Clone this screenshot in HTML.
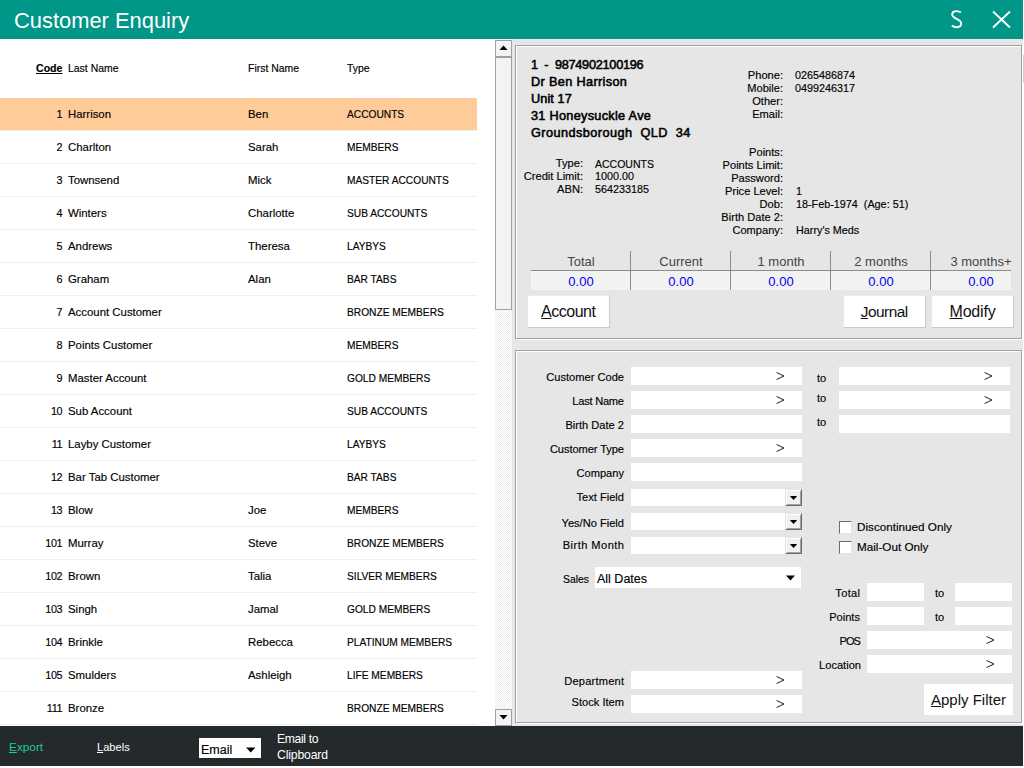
<!DOCTYPE html>
<html><head><meta charset="utf-8"><title>Customer Enquiry</title>
<style>
html,body{margin:0;padding:0;width:1024px;height:768px;overflow:hidden;background:#fff}
body{position:relative;font-family:"Liberation Sans",sans-serif}
.t{position:absolute;white-space:nowrap;line-height:normal;font-family:"Liberation Sans",sans-serif;-webkit-text-stroke:0.15px currentColor}
u{text-decoration:underline;text-underline-offset:1px}
</style></head><body>
<div style="position:absolute;left:0px;top:0px;width:1024px;height:768px;background:#fff"></div>
<div style="position:absolute;left:0px;top:0px;width:1023px;height:39px;background:#009688"></div>
<div class="t" style="left:14px;top:8.18px;font-size:21.9px;color:#fff;-webkit-text-stroke:0">Customer Enquiry</div>
<svg style="position:absolute;left:940px;top:0" width="84" height="39" viewBox="940 0 84 39"><path d="M960.8 12.6 C959.5 11.6 958 11.1 956.4 11.1 C953.6 11.1 952.2 12.8 952.2 14.6 C952.2 16.6 953.6 17.6 956.6 18.9 C959.6 20.2 961.2 21.4 961.2 23.6 C961.2 25.8 959.4 27.2 956.6 27.2 C954.6 27.2 952.9 26.5 951.8 25.5" fill="none" stroke="#fff" stroke-width="1.9"/><path d="M993 11.5 L1010 27.5 M1010 11.5 L993 27.5" stroke="#fff" stroke-width="1.8"/></svg>
<div style="position:absolute;left:512px;top:39px;width:511px;height:687px;background:#e6e6e6"></div>
<div class="t" style="left:36px;top:62.41px;font-size:10.6px;font-weight:bold;color:#000;"><u>Code</u></div>
<div class="t" style="left:68px;top:62.55px;font-size:10.44px;color:#000;">Last Name</div>
<div class="t" style="left:248px;top:62.55px;font-size:10.44px;color:#000;">First Name</div>
<div class="t" style="left:347px;top:62.55px;font-size:10.44px;color:#000;">Type</div>
<div style="position:absolute;left:0px;top:98px;width:477px;height:32px;background:#ffcc99"></div>
<div class="t" style="left:22.299999999999997px;width:40px;text-align:right;top:108.23px;font-size:10.8px;color:#000;letter-spacing:-0.3px">1</div>
<div class="t" style="left:68px;top:107.68px;font-size:11.4px;color:#000;">Harrison</div>
<div class="t" style="left:248px;top:107.68px;font-size:11.4px;color:#000;">Ben</div>
<div class="t" style="left:347px;top:108.77px;font-size:10.2px;color:#000;">ACCOUNTS</div>
<div style="position:absolute;left:0px;top:130px;width:477px;height:1px;background:#efefef"></div>
<div class="t" style="left:22.299999999999997px;width:40px;text-align:right;top:141.23px;font-size:10.8px;color:#000;letter-spacing:-0.3px">2</div>
<div class="t" style="left:68px;top:140.68px;font-size:11.4px;color:#000;">Charlton</div>
<div class="t" style="left:248px;top:140.68px;font-size:11.4px;color:#000;">Sarah</div>
<div class="t" style="left:347px;top:141.77px;font-size:10.2px;color:#000;">MEMBERS</div>
<div style="position:absolute;left:0px;top:163px;width:477px;height:1px;background:#efefef"></div>
<div class="t" style="left:22.299999999999997px;width:40px;text-align:right;top:174.23px;font-size:10.8px;color:#000;letter-spacing:-0.3px">3</div>
<div class="t" style="left:68px;top:173.68px;font-size:11.4px;color:#000;">Townsend</div>
<div class="t" style="left:248px;top:173.68px;font-size:11.4px;color:#000;">Mick</div>
<div class="t" style="left:347px;top:174.77px;font-size:10.2px;color:#000;">MASTER ACCOUNTS</div>
<div style="position:absolute;left:0px;top:196px;width:477px;height:1px;background:#efefef"></div>
<div class="t" style="left:22.299999999999997px;width:40px;text-align:right;top:207.23px;font-size:10.8px;color:#000;letter-spacing:-0.3px">4</div>
<div class="t" style="left:68px;top:206.68px;font-size:11.4px;color:#000;">Winters</div>
<div class="t" style="left:248px;top:206.68px;font-size:11.4px;color:#000;">Charlotte</div>
<div class="t" style="left:347px;top:207.77px;font-size:10.2px;color:#000;">SUB ACCOUNTS</div>
<div style="position:absolute;left:0px;top:229px;width:477px;height:1px;background:#efefef"></div>
<div class="t" style="left:22.299999999999997px;width:40px;text-align:right;top:240.23px;font-size:10.8px;color:#000;letter-spacing:-0.3px">5</div>
<div class="t" style="left:68px;top:239.68px;font-size:11.4px;color:#000;">Andrews</div>
<div class="t" style="left:248px;top:239.68px;font-size:11.4px;color:#000;">Theresa</div>
<div class="t" style="left:347px;top:240.77px;font-size:10.2px;color:#000;">LAYBYS</div>
<div style="position:absolute;left:0px;top:262px;width:477px;height:1px;background:#efefef"></div>
<div class="t" style="left:22.299999999999997px;width:40px;text-align:right;top:273.23px;font-size:10.8px;color:#000;letter-spacing:-0.3px">6</div>
<div class="t" style="left:68px;top:272.68px;font-size:11.4px;color:#000;">Graham</div>
<div class="t" style="left:248px;top:272.68px;font-size:11.4px;color:#000;">Alan</div>
<div class="t" style="left:347px;top:273.77px;font-size:10.2px;color:#000;">BAR TABS</div>
<div style="position:absolute;left:0px;top:295px;width:477px;height:1px;background:#efefef"></div>
<div class="t" style="left:22.299999999999997px;width:40px;text-align:right;top:306.23px;font-size:10.8px;color:#000;letter-spacing:-0.3px">7</div>
<div class="t" style="left:68px;top:305.68px;font-size:11.4px;color:#000;">Account Customer</div>
<div class="t" style="left:248px;top:305.68px;font-size:11.4px;color:#000;"></div>
<div class="t" style="left:347px;top:306.77px;font-size:10.2px;color:#000;">BRONZE MEMBERS</div>
<div style="position:absolute;left:0px;top:328px;width:477px;height:1px;background:#efefef"></div>
<div class="t" style="left:22.299999999999997px;width:40px;text-align:right;top:339.23px;font-size:10.8px;color:#000;letter-spacing:-0.3px">8</div>
<div class="t" style="left:68px;top:338.68px;font-size:11.4px;color:#000;">Points Customer</div>
<div class="t" style="left:248px;top:338.68px;font-size:11.4px;color:#000;"></div>
<div class="t" style="left:347px;top:339.77px;font-size:10.2px;color:#000;">MEMBERS</div>
<div style="position:absolute;left:0px;top:361px;width:477px;height:1px;background:#efefef"></div>
<div class="t" style="left:22.299999999999997px;width:40px;text-align:right;top:372.23px;font-size:10.8px;color:#000;letter-spacing:-0.3px">9</div>
<div class="t" style="left:68px;top:371.68px;font-size:11.4px;color:#000;">Master Account</div>
<div class="t" style="left:248px;top:371.68px;font-size:11.4px;color:#000;"></div>
<div class="t" style="left:347px;top:372.77px;font-size:10.2px;color:#000;">GOLD MEMBERS</div>
<div style="position:absolute;left:0px;top:394px;width:477px;height:1px;background:#efefef"></div>
<div class="t" style="left:22.299999999999997px;width:40px;text-align:right;top:405.23px;font-size:10.8px;color:#000;letter-spacing:-0.3px">10</div>
<div class="t" style="left:68px;top:404.68px;font-size:11.4px;color:#000;">Sub Account</div>
<div class="t" style="left:248px;top:404.68px;font-size:11.4px;color:#000;"></div>
<div class="t" style="left:347px;top:405.77px;font-size:10.2px;color:#000;">SUB ACCOUNTS</div>
<div style="position:absolute;left:0px;top:427px;width:477px;height:1px;background:#efefef"></div>
<div class="t" style="left:22.299999999999997px;width:40px;text-align:right;top:438.23px;font-size:10.8px;color:#000;letter-spacing:-0.3px">11</div>
<div class="t" style="left:68px;top:437.68px;font-size:11.4px;color:#000;">Layby Customer</div>
<div class="t" style="left:248px;top:437.68px;font-size:11.4px;color:#000;"></div>
<div class="t" style="left:347px;top:438.77px;font-size:10.2px;color:#000;">LAYBYS</div>
<div style="position:absolute;left:0px;top:460px;width:477px;height:1px;background:#efefef"></div>
<div class="t" style="left:22.299999999999997px;width:40px;text-align:right;top:471.23px;font-size:10.8px;color:#000;letter-spacing:-0.3px">12</div>
<div class="t" style="left:68px;top:470.68px;font-size:11.4px;color:#000;">Bar Tab Customer</div>
<div class="t" style="left:248px;top:470.68px;font-size:11.4px;color:#000;"></div>
<div class="t" style="left:347px;top:471.77px;font-size:10.2px;color:#000;">BAR TABS</div>
<div style="position:absolute;left:0px;top:493px;width:477px;height:1px;background:#efefef"></div>
<div class="t" style="left:22.299999999999997px;width:40px;text-align:right;top:504.23px;font-size:10.8px;color:#000;letter-spacing:-0.3px">13</div>
<div class="t" style="left:68px;top:503.68px;font-size:11.4px;color:#000;">Blow</div>
<div class="t" style="left:248px;top:503.68px;font-size:11.4px;color:#000;">Joe</div>
<div class="t" style="left:347px;top:504.77px;font-size:10.2px;color:#000;">MEMBERS</div>
<div style="position:absolute;left:0px;top:526px;width:477px;height:1px;background:#efefef"></div>
<div class="t" style="left:22.299999999999997px;width:40px;text-align:right;top:537.23px;font-size:10.8px;color:#000;letter-spacing:-0.3px">101</div>
<div class="t" style="left:68px;top:536.68px;font-size:11.4px;color:#000;">Murray</div>
<div class="t" style="left:248px;top:536.68px;font-size:11.4px;color:#000;">Steve</div>
<div class="t" style="left:347px;top:537.77px;font-size:10.2px;color:#000;">BRONZE MEMBERS</div>
<div style="position:absolute;left:0px;top:559px;width:477px;height:1px;background:#efefef"></div>
<div class="t" style="left:22.299999999999997px;width:40px;text-align:right;top:570.23px;font-size:10.8px;color:#000;letter-spacing:-0.3px">102</div>
<div class="t" style="left:68px;top:569.68px;font-size:11.4px;color:#000;">Brown</div>
<div class="t" style="left:248px;top:569.68px;font-size:11.4px;color:#000;">Talia</div>
<div class="t" style="left:347px;top:570.77px;font-size:10.2px;color:#000;">SILVER MEMBERS</div>
<div style="position:absolute;left:0px;top:592px;width:477px;height:1px;background:#efefef"></div>
<div class="t" style="left:22.299999999999997px;width:40px;text-align:right;top:603.23px;font-size:10.8px;color:#000;letter-spacing:-0.3px">103</div>
<div class="t" style="left:68px;top:602.68px;font-size:11.4px;color:#000;">Singh</div>
<div class="t" style="left:248px;top:602.68px;font-size:11.4px;color:#000;">Jamal</div>
<div class="t" style="left:347px;top:603.77px;font-size:10.2px;color:#000;">GOLD MEMBERS</div>
<div style="position:absolute;left:0px;top:625px;width:477px;height:1px;background:#efefef"></div>
<div class="t" style="left:22.299999999999997px;width:40px;text-align:right;top:636.23px;font-size:10.8px;color:#000;letter-spacing:-0.3px">104</div>
<div class="t" style="left:68px;top:635.68px;font-size:11.4px;color:#000;">Brinkle</div>
<div class="t" style="left:248px;top:635.68px;font-size:11.4px;color:#000;">Rebecca</div>
<div class="t" style="left:347px;top:636.77px;font-size:10.2px;color:#000;">PLATINUM MEMBERS</div>
<div style="position:absolute;left:0px;top:658px;width:477px;height:1px;background:#efefef"></div>
<div class="t" style="left:22.299999999999997px;width:40px;text-align:right;top:669.23px;font-size:10.8px;color:#000;letter-spacing:-0.3px">105</div>
<div class="t" style="left:68px;top:668.68px;font-size:11.4px;color:#000;">Smulders</div>
<div class="t" style="left:248px;top:668.68px;font-size:11.4px;color:#000;">Ashleigh</div>
<div class="t" style="left:347px;top:669.77px;font-size:10.2px;color:#000;">LIFE MEMBERS</div>
<div style="position:absolute;left:0px;top:691px;width:477px;height:1px;background:#efefef"></div>
<div class="t" style="left:22.299999999999997px;width:40px;text-align:right;top:702.23px;font-size:10.8px;color:#000;letter-spacing:-0.3px">111</div>
<div class="t" style="left:68px;top:701.68px;font-size:11.4px;color:#000;">Bronze</div>
<div class="t" style="left:248px;top:701.68px;font-size:11.4px;color:#000;"></div>
<div class="t" style="left:347px;top:702.77px;font-size:10.2px;color:#000;">BRONZE MEMBERS</div>
<div style="position:absolute;left:0px;top:724px;width:477px;height:1px;background:#efefef"></div>
<div style="position:absolute;left:1023px;top:55px;width:1px;height:28px;background:#d0d0d0"></div>
<div style="position:absolute;left:495px;top:40px;width:17px;height:686px;background-color:#fff;background-image:linear-gradient(45deg,#eee 25%,transparent 25%,transparent 75%,#eee 75%),linear-gradient(45deg,#eee 25%,transparent 25%,transparent 75%,#eee 75%);background-size:2px 2px;background-position:0 0,1px 1px"></div>
<div style="position:absolute;left:495px;top:40px;width:17px;height:17px;background:#f3f3f3;box-sizing:border-box;border:1px solid #a0a0a0"></div>
<div style="position:absolute;left:495px;top:57px;width:17px;height:253px;background:#f3f3f3;box-sizing:border-box;border:1px solid #a0a0a0"></div>
<div style="position:absolute;left:495px;top:709px;width:17px;height:17px;background:#f3f3f3;box-sizing:border-box;border:1px solid #a0a0a0"></div>
<svg style="position:absolute;left:495px;top:40px" width="17" height="17"><path d="M4.5 10 L12.5 10 L8.5 5.5 Z" fill="#000"/></svg>
<svg style="position:absolute;left:495px;top:709px" width="17" height="17"><path d="M4.5 6 L12.5 6 L8.5 10.5 Z" fill="#000"/></svg>
<div style="position:absolute;left:516px;top:46px;width:507px;height:294px;box-sizing:border-box;border:1px solid #fff"></div>
<div style="position:absolute;left:515px;top:45px;width:507px;height:294px;box-sizing:border-box;border:1px solid #a0a0a0"></div>
<div style="position:absolute;left:516px;top:351px;width:507px;height:373px;box-sizing:border-box;border:1px solid #fff"></div>
<div style="position:absolute;left:515px;top:350px;width:507px;height:373px;box-sizing:border-box;border:1px solid #a0a0a0"></div>
<div class="t" style="left:531px;top:57.51px;font-size:12.7px;color:#000;letter-spacing:-0.25px;-webkit-text-stroke:0.55px #000">1&nbsp; -&nbsp; 9874902100196</div>
<div class="t" style="left:531px;top:74.51px;font-size:12.7px;color:#000;letter-spacing:0.35px;-webkit-text-stroke:0.55px #000">Dr Ben Harrison</div>
<div class="t" style="left:531px;top:91.51px;font-size:12.7px;color:#000;letter-spacing:0.1px;-webkit-text-stroke:0.55px #000">Unit 17</div>
<div class="t" style="left:531px;top:108.51px;font-size:12.7px;color:#000;letter-spacing:0.3px;-webkit-text-stroke:0.55px #000">31 Honeysuckle Ave</div>
<div class="t" style="left:531px;top:125.51px;font-size:12.7px;color:#000;letter-spacing:0.45px;-webkit-text-stroke:0.55px #000">Groundsborough&nbsp; QLD&nbsp; 34</div>
<div class="t" style="left:683px;width:100px;text-align:right;top:68.95px;font-size:11.1px;color:#000;">Phone:</div>
<div class="t" style="left:683px;width:100px;text-align:right;top:81.95px;font-size:11.1px;color:#000;">Mobile:</div>
<div class="t" style="left:683px;width:100px;text-align:right;top:94.95px;font-size:11.1px;color:#000;">Other:</div>
<div class="t" style="left:683px;width:100px;text-align:right;top:107.95px;font-size:11.1px;color:#000;">Email:</div>
<div class="t" style="left:795px;top:69.23px;font-size:10.8px;color:#000;">0265486874</div>
<div class="t" style="left:795px;top:82.23px;font-size:10.8px;color:#000;">0499246317</div>
<div class="t" style="left:483px;width:100px;text-align:right;top:156.95px;font-size:11.1px;color:#000;">Type:</div>
<div class="t" style="left:483px;width:100px;text-align:right;top:169.95px;font-size:11.1px;color:#000;">Credit Limit:</div>
<div class="t" style="left:483px;width:100px;text-align:right;top:182.95px;font-size:11.1px;color:#000;">ABN:</div>
<div class="t" style="left:595px;top:157.50px;font-size:10.5px;color:#000;">ACCOUNTS</div>
<div class="t" style="left:595px;top:170.23px;font-size:10.8px;color:#000;">1000.00</div>
<div class="t" style="left:595px;top:183.23px;font-size:10.8px;color:#000;">564233185</div>
<div class="t" style="left:683px;width:100px;text-align:right;top:145.95px;font-size:11.1px;color:#000;">Points:</div>
<div class="t" style="left:683px;width:100px;text-align:right;top:158.95px;font-size:11.1px;color:#000;">Points Limit:</div>
<div class="t" style="left:683px;width:100px;text-align:right;top:171.95px;font-size:11.1px;color:#000;">Password:</div>
<div class="t" style="left:683px;width:100px;text-align:right;top:184.95px;font-size:11.1px;color:#000;">Price Level:</div>
<div class="t" style="left:683px;width:100px;text-align:right;top:197.95px;font-size:11.1px;color:#000;">Dob:</div>
<div class="t" style="left:683px;width:100px;text-align:right;top:210.95px;font-size:11.1px;color:#000;">Birth Date 2:</div>
<div class="t" style="left:683px;width:100px;text-align:right;top:223.95px;font-size:11.1px;color:#000;">Company:</div>
<div class="t" style="left:796px;top:185.23px;font-size:10.8px;color:#000;">1</div>
<div class="t" style="left:796px;top:198.23px;font-size:10.8px;color:#000;">18-Feb-1974&nbsp; (Age: 51)</div>
<div class="t" style="left:796px;top:224.23px;font-size:10.8px;color:#000;">Harry's Meds</div>
<div style="position:absolute;left:531px;top:270px;width:480px;height:1px;background:#8c8c8c"></div>
<div style="position:absolute;left:531px;top:271px;width:480px;height:19px;background:#f2f2f2"></div>
<div class="t" style="left:531.0px;width:100px;text-align:center;top:254.24px;font-size:13px;color:#444;-webkit-text-stroke:0">Total</div>
<div class="t" style="left:531.0px;width:100px;text-align:center;top:274.24px;font-size:13px;color:#0000f0;-webkit-text-stroke:0">0.00</div>
<div class="t" style="left:631.0px;width:100px;text-align:center;top:254.24px;font-size:13px;color:#444;-webkit-text-stroke:0">Current</div>
<div class="t" style="left:631.0px;width:100px;text-align:center;top:274.24px;font-size:13px;color:#0000f0;-webkit-text-stroke:0">0.00</div>
<div style="position:absolute;left:630px;top:251px;width:1px;height:39px;background:#8c8c8c"></div>
<div class="t" style="left:731.0px;width:100px;text-align:center;top:254.24px;font-size:13px;color:#444;-webkit-text-stroke:0">1 month</div>
<div class="t" style="left:731.0px;width:100px;text-align:center;top:274.24px;font-size:13px;color:#0000f0;-webkit-text-stroke:0">0.00</div>
<div style="position:absolute;left:730px;top:251px;width:1px;height:39px;background:#8c8c8c"></div>
<div class="t" style="left:831.0px;width:100px;text-align:center;top:254.24px;font-size:13px;color:#444;-webkit-text-stroke:0">2 months</div>
<div class="t" style="left:831.0px;width:100px;text-align:center;top:274.24px;font-size:13px;color:#0000f0;-webkit-text-stroke:0">0.00</div>
<div style="position:absolute;left:830px;top:251px;width:1px;height:39px;background:#8c8c8c"></div>
<div class="t" style="left:931.0px;width:100px;text-align:center;top:254.24px;font-size:13px;color:#444;-webkit-text-stroke:0">3 months+</div>
<div class="t" style="left:931.0px;width:100px;text-align:center;top:274.24px;font-size:13px;color:#0000f0;-webkit-text-stroke:0">0.00</div>
<div style="position:absolute;left:930px;top:251px;width:1px;height:39px;background:#8c8c8c"></div>
<div style="position:absolute;left:527px;top:295px;width:83px;height:33px;background:#fff;box-sizing:border-box;border:1px solid #cfcbc0;border-top-color:#f0eee4;border-left-color:#eceae0"></div>
<div class="t" style="left:468.5px;width:200px;text-align:center;top:302.52px;font-size:16px;color:#111;letter-spacing:-0.5px;text-indent:-0.5px;-webkit-text-stroke:0"><u>A</u>ccount</div>
<div style="position:absolute;left:843px;top:295px;width:83px;height:33px;background:#fff;box-sizing:border-box;border:1px solid #cfcbc0;border-top-color:#f0eee4;border-left-color:#eceae0"></div>
<div class="t" style="left:784.5px;width:200px;text-align:center;top:303.06px;font-size:15.4px;color:#111;letter-spacing:-0.5px;text-indent:-0.5px;-webkit-text-stroke:0"><u>J</u>ournal</div>
<div style="position:absolute;left:931px;top:295px;width:83px;height:33px;background:#fff;box-sizing:border-box;border:1px solid #cfcbc0;border-top-color:#f0eee4;border-left-color:#eceae0"></div>
<div class="t" style="left:872.5px;width:200px;text-align:center;top:302.52px;font-size:16px;color:#111;letter-spacing:-0.2px;-webkit-text-stroke:0"><u>M</u>odify</div>
<div class="t" style="left:474px;width:150px;text-align:right;top:370.95px;font-size:11.1px;color:#000;">Customer Code</div>
<div style="position:absolute;left:631px;top:367px;width:171px;height:18px;background:#fff"></div>
<svg style="position:absolute;left:776px;top:372px" width="9" height="8"><path d="M0.5 0.5 L8 4 L0.5 7.5" fill="none" stroke="#222" stroke-width="1"/></svg>
<div class="t" style="left:473.75px;width:150px;text-align:right;top:394.95px;font-size:11.1px;color:#000;letter-spacing:-0.25px">Last Name</div>
<div style="position:absolute;left:631px;top:391px;width:171px;height:18px;background:#fff"></div>
<svg style="position:absolute;left:776px;top:396px" width="9" height="8"><path d="M0.5 0.5 L8 4 L0.5 7.5" fill="none" stroke="#222" stroke-width="1"/></svg>
<div class="t" style="left:474px;width:150px;text-align:right;top:418.95px;font-size:11.1px;color:#000;">Birth Date 2</div>
<div style="position:absolute;left:631px;top:415px;width:171px;height:18px;background:#fff"></div>
<div class="t" style="left:473.91999999999996px;width:150px;text-align:right;top:442.95px;font-size:11.1px;color:#000;letter-spacing:-0.08px">Customer Type</div>
<div style="position:absolute;left:631px;top:439px;width:171px;height:18px;background:#fff"></div>
<svg style="position:absolute;left:776px;top:444px" width="9" height="8"><path d="M0.5 0.5 L8 4 L0.5 7.5" fill="none" stroke="#222" stroke-width="1"/></svg>
<div class="t" style="left:474px;width:150px;text-align:right;top:466.95px;font-size:11.1px;color:#000;">Company</div>
<div style="position:absolute;left:631px;top:463px;width:171px;height:18px;background:#fff"></div>
<div class="t" style="left:817px;top:371.95px;font-size:11.1px;color:#000;">to</div>
<div style="position:absolute;left:839px;top:367px;width:171px;height:18px;background:#fff"></div>
<svg style="position:absolute;left:984px;top:372px" width="9" height="8"><path d="M0.5 0.5 L8 4 L0.5 7.5" fill="none" stroke="#222" stroke-width="1"/></svg>
<div class="t" style="left:817px;top:391.95px;font-size:11.1px;color:#000;">to</div>
<div style="position:absolute;left:839px;top:391px;width:171px;height:18px;background:#fff"></div>
<svg style="position:absolute;left:984px;top:396px" width="9" height="8"><path d="M0.5 0.5 L8 4 L0.5 7.5" fill="none" stroke="#222" stroke-width="1"/></svg>
<div class="t" style="left:817px;top:415.95px;font-size:11.1px;color:#000;">to</div>
<div style="position:absolute;left:839px;top:415px;width:171px;height:18px;background:#fff"></div>
<div class="t" style="left:474px;width:150px;text-align:right;top:490.95px;font-size:11.1px;color:#000;">Text Field</div>
<div style="position:absolute;left:631px;top:489px;width:171px;height:17px;background:#fff"></div>
<div style="position:absolute;left:785px;top:489px;width:17px;height:17px;background:#f0f0f0;box-sizing:border-box;border-top:1px solid #e3e3e3;border-left:1px solid #e3e3e3;border-right:1px solid #696969;border-bottom:1px solid #696969;box-shadow:inset 1px 1px #fff,inset -1px -1px #a0a0a0"></div>
<svg style="position:absolute;left:785px;top:489px" width="17" height="17"><path d="M4.8 7 L12.2 7 L8.5 11 Z" fill="#000"/></svg>
<div class="t" style="left:474px;width:150px;text-align:right;top:516.95px;font-size:11.1px;color:#000;">Yes/No Field</div>
<div style="position:absolute;left:631px;top:513px;width:171px;height:17px;background:#fff"></div>
<div style="position:absolute;left:785px;top:513px;width:17px;height:17px;background:#f0f0f0;box-sizing:border-box;border-top:1px solid #e3e3e3;border-left:1px solid #e3e3e3;border-right:1px solid #696969;border-bottom:1px solid #696969;box-shadow:inset 1px 1px #fff,inset -1px -1px #a0a0a0"></div>
<svg style="position:absolute;left:785px;top:513px" width="17" height="17"><path d="M4.8 7 L12.2 7 L8.5 11 Z" fill="#000"/></svg>
<div class="t" style="left:474.45000000000005px;width:150px;text-align:right;top:538.95px;font-size:11.1px;color:#000;letter-spacing:0.45px">Birth Month</div>
<div style="position:absolute;left:631px;top:537px;width:171px;height:17px;background:#fff"></div>
<div style="position:absolute;left:785px;top:537px;width:17px;height:17px;background:#f0f0f0;box-sizing:border-box;border-top:1px solid #e3e3e3;border-left:1px solid #e3e3e3;border-right:1px solid #696969;border-bottom:1px solid #696969;box-shadow:inset 1px 1px #fff,inset -1px -1px #a0a0a0"></div>
<svg style="position:absolute;left:785px;top:537px" width="17" height="17"><path d="M4.8 7 L12.2 7 L8.5 11 Z" fill="#000"/></svg>
<div style="position:absolute;left:839px;top:521px;width:13px;height:13px;background:#fff;box-sizing:border-box;border-top:1px solid #6d6d6d;border-left:1px solid #6d6d6d;border-right:1px solid #e3e3e3;border-bottom:1px solid #e3e3e3"></div>
<div class="t" style="left:857px;top:520.41px;font-size:11.7px;color:#000;">Discontinued Only</div>
<div style="position:absolute;left:839px;top:541px;width:13px;height:13px;background:#fff;box-sizing:border-box;border-top:1px solid #6d6d6d;border-left:1px solid #6d6d6d;border-right:1px solid #e3e3e3;border-bottom:1px solid #e3e3e3"></div>
<div class="t" style="left:857px;top:540.41px;font-size:11.7px;color:#000;">Mail-Out Only</div>
<div class="t" style="left:489px;width:100px;text-align:right;top:573.59px;font-size:10.4px;color:#000;">Sales</div>
<div style="position:absolute;left:595px;top:567px;width:206px;height:21px;background:#fff"></div>
<div class="t" style="left:597px;top:571.69px;font-size:12.5px;color:#000;">All Dates</div>
<svg style="position:absolute;left:786px;top:575px" width="10" height="7"><path d="M0 0.5 L9 0.5 L4.5 5.5 Z" fill="#000"/></svg>
<div class="t" style="left:760.3px;width:100px;text-align:right;top:586.95px;font-size:11.1px;color:#000;letter-spacing:0.3px">Total</div>
<div style="position:absolute;left:867px;top:583px;width:57px;height:18px;background:#fff"></div>
<div class="t" style="left:935px;top:586.95px;font-size:11.1px;color:#000;">to</div>
<div style="position:absolute;left:955px;top:583px;width:57px;height:18px;background:#fff"></div>
<div class="t" style="left:760px;width:100px;text-align:right;top:610.95px;font-size:11.1px;color:#000;">Points</div>
<div style="position:absolute;left:867px;top:607px;width:57px;height:18px;background:#fff"></div>
<div class="t" style="left:935px;top:610.95px;font-size:11.1px;color:#000;">to</div>
<div style="position:absolute;left:955px;top:607px;width:57px;height:18px;background:#fff"></div>
<div class="t" style="left:760.0px;width:100px;text-align:right;top:634.95px;font-size:11.1px;color:#000;letter-spacing:-1.0px">POS</div>
<div style="position:absolute;left:867px;top:631px;width:145px;height:18px;background:#fff"></div>
<svg style="position:absolute;left:986px;top:636px" width="9" height="8"><path d="M0.5 0.5 L8 4 L0.5 7.5" fill="none" stroke="#222" stroke-width="1"/></svg>
<div class="t" style="left:761px;width:100px;text-align:right;top:658.95px;font-size:11.1px;color:#000;">Location</div>
<div style="position:absolute;left:867px;top:655px;width:145px;height:18px;background:#fff"></div>
<svg style="position:absolute;left:986px;top:660px" width="9" height="8"><path d="M0.5 0.5 L8 4 L0.5 7.5" fill="none" stroke="#222" stroke-width="1"/></svg>
<div class="t" style="left:474.20000000000005px;width:150px;text-align:right;top:674.95px;font-size:11.1px;color:#000;letter-spacing:0.2px">Department</div>
<div style="position:absolute;left:631px;top:671px;width:171px;height:18px;background:#fff"></div>
<svg style="position:absolute;left:776px;top:676px" width="9" height="8"><path d="M0.5 0.5 L8 4 L0.5 7.5" fill="none" stroke="#222" stroke-width="1"/></svg>
<div class="t" style="left:474px;width:150px;text-align:right;top:695.95px;font-size:11.1px;color:#000;">Stock Item</div>
<div style="position:absolute;left:631px;top:695px;width:171px;height:18px;background:#fff"></div>
<svg style="position:absolute;left:776px;top:700px" width="9" height="8"><path d="M0.5 0.5 L8 4 L0.5 7.5" fill="none" stroke="#222" stroke-width="1"/></svg>
<div style="position:absolute;left:924px;top:684px;width:89px;height:31px;background:#fff"></div>
<div class="t" style="left:868.5px;width:200px;text-align:center;top:691.42px;font-size:15px;color:#111;-webkit-text-stroke:0"><u>A</u>pply Filter</div>
<div style="position:absolute;left:0px;top:726px;width:1023px;height:40px;background:#24292c"></div>
<div class="t" style="left:9px;top:740.32px;font-size:11.8px;color:#1ec8a0;-webkit-text-stroke:0"><u>E</u>xport</div>
<div class="t" style="left:97px;top:740.95px;font-size:11.1px;color:#fff;-webkit-text-stroke:0"><u>L</u>abels</div>
<div style="position:absolute;left:199px;top:738px;width:62px;height:20px;background:#fff"></div>
<div class="t" style="left:201px;top:742.69px;font-size:12.5px;color:#000;">Email</div>
<svg style="position:absolute;left:246px;top:747px" width="10" height="6"><path d="M0 0.5 L9.5 0.5 L4.75 5.5 Z" fill="#000"/></svg>
<div class="t" style="left:277px;top:731.96px;font-size:12.2px;color:#fff;letter-spacing:-0.35px;-webkit-text-stroke:0">Email to</div>
<div class="t" style="left:277px;top:747.96px;font-size:12.2px;color:#fff;letter-spacing:-0.15px;-webkit-text-stroke:0">Clipboard</div>
</body></html>
